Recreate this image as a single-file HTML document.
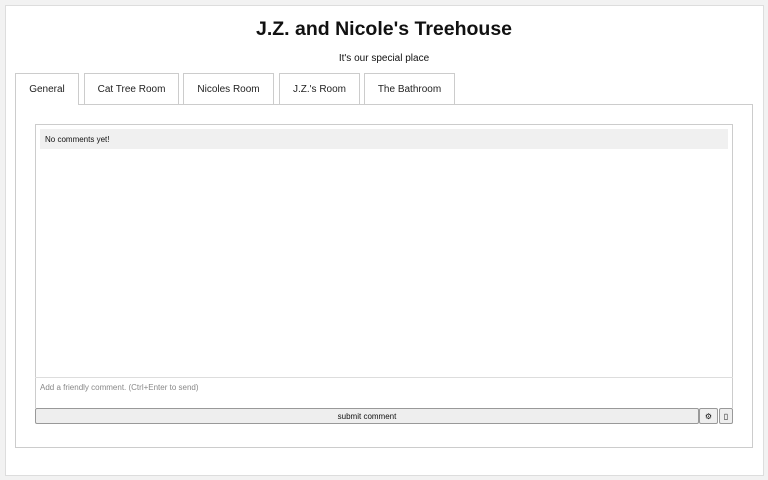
<!DOCTYPE html>
<html><head><style>
body{margin:0;width:768px;height:480px;background:#f2f2f2;font-family:"Liberation Sans",sans-serif;position:relative;overflow:hidden}
.card{position:absolute;left:5px;top:5px;width:757px;height:469px;background:#fff;border:1px solid #ddd}
h1{position:absolute;left:0;width:768px;top:18px;margin:0;text-align:center;font-size:19.5px;font-weight:bold;color:#111}
.sub{position:absolute;left:0;width:768px;top:53px;text-align:center;font-size:10px;color:#111}
.tab{position:absolute;top:73px;height:31px;border:1px solid #ccc;border-bottom:none;background:#fff;font-size:10px;color:#222;text-align:center;line-height:32px;box-sizing:border-box}
.panel{position:absolute;left:15px;top:104px;width:738px;height:344px;border:1px solid #ccc;box-sizing:border-box;background:#fff}
.box{position:absolute;left:35px;top:124px;width:698px;height:284px;border:1px solid #ccc;box-sizing:border-box;border-bottom:none}
.none{position:absolute;left:40px;top:129px;width:688px;height:20px;background:#f0f0f0;font-size:8px;line-height:21px;box-sizing:border-box;padding-left:5px;color:#111}
.line{position:absolute;left:35px;top:377px;width:698px;border-top:1px solid #ddd}
.ph{position:absolute;left:40px;top:383px;font-size:8px;color:#888}
.btn{position:absolute;top:408px;height:16px;border:1px solid #999;border-radius:2px;background:#eee;box-sizing:border-box;font-size:8px;line-height:15px;text-align:center;color:#111}
</style></head><body>
<div class="card"></div>
<h1>J.Z. and Nicole's Treehouse</h1>
<div class="sub">It's our special place</div>
<div class="panel"></div>
<div class="tab" style="left:15px;width:64px;height:32px">General</div>
<div class="tab" style="left:84px;width:95px">Cat Tree Room</div>
<div class="tab" style="left:183px;width:91px">Nicoles Room</div>
<div class="tab" style="left:279px;width:81px">J.Z.'s Room</div>
<div class="tab" style="left:364px;width:91px">The Bathroom</div>
<div class="box"></div>
<div class="none">No comments yet!</div>
<div class="line"></div>
<div class="ph">Add a friendly comment. (Ctrl+Enter to send)</div>
<div class="btn" style="left:35px;width:664px">submit comment</div>
<div class="btn" style="left:699px;width:19px">⚙</div>
<div class="btn" style="left:719px;width:14px">▯</div>
</body></html>
